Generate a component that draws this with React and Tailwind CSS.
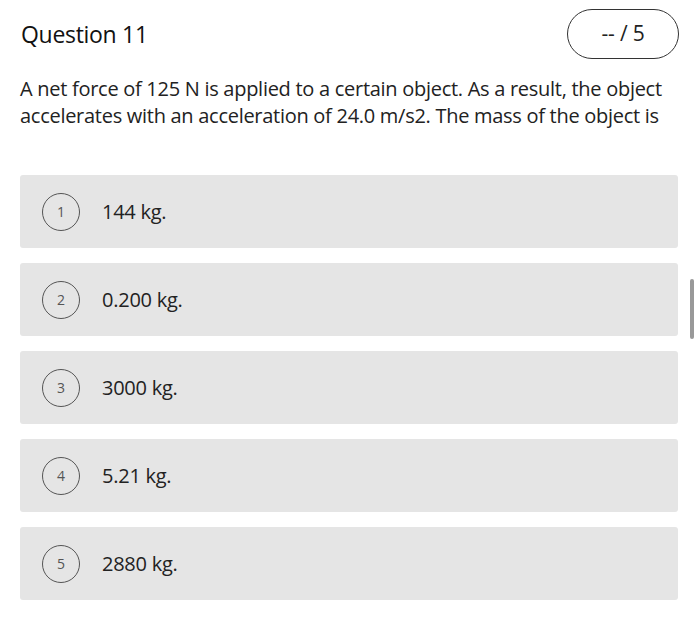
import React from "react";

const options = ["144 kg.", "0.200 kg.", "3000 kg.", "5.21 kg.", "2880 kg."];

export default function App() {
  return (
    <div
      className="relative w-[700px] h-[624px] bg-white text-[#222]"
      style={{ fontFamily: '"Open Sans", "Noto Sans", sans-serif' }}
    >
      <div className="flex items-center justify-between pl-[21px] pr-[21px] pt-[9px]">
        <h1 className="text-[23px] leading-[50px] font-normal tracking-[-0.3px] text-[#111]">Question 11</h1>
        <div className="flex h-[50px] w-[112px] items-center justify-center rounded-full border-[1.5px] border-[#333] text-[21px] tracking-[-0.2px] text-[#222]">
          -- / 5
        </div>
      </div>
      <p className="mt-[16px] px-[20px] text-[20px] leading-[27px] tracking-[-0.28px] text-[#222]">
        A net force of 125 N is applied to a certain object. As a result, the object
        accelerates with an acceleration of 24.0 m/s2. The mass of the object is
      </p>
      <div className="mt-[46px] flex flex-col gap-[15px] pl-[20px] pr-[22px]">
        {options.map((o, i) => (
          <div
            key={i}
            className="flex h-[73px] items-center rounded-[3px] bg-[#e5e5e5] pl-[22px]"
          >
            <div className="flex h-[38px] w-[38px] items-center justify-center rounded-full border-[1.5px] border-[#555] text-[14px] text-[#555]">
              {i + 1}
            </div>
            <span className="ml-[22px] text-[20px] tracking-[-0.25px] text-[#222]">{o}</span>
          </div>
        ))}
      </div>
      <div className="absolute left-[690px] top-[279px] h-[60px] w-[4px] rounded-full bg-[#999]" />
    </div>
  );
}
